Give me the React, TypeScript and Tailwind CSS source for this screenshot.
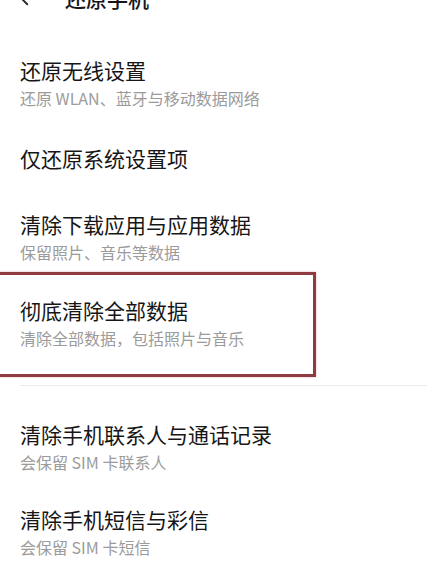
import React from "react";

type Item = {
  title: string;
  sub?: string;
  gap: string;
};

const topItems: Item[] = [
  { title: "还原无线设置", sub: "还原 WLAN、蓝牙与移动数据网络", gap: "mt-[37px]" },
  { title: "仅还原系统设置项", gap: "mt-[36px]" },
  { title: "清除下载应用与应用数据", sub: "保留照片、音乐等数据", gap: "mt-[38px]" },
];

const bottomItems: Item[] = [
  { title: "清除手机联系人与通话记录", sub: "会保留 SIM 卡联系人", gap: "mt-[34px]" },
  { title: "清除手机短信与彩信", sub: "会保留 SIM 卡短信", gap: "mt-[33px]" },
];

const font = { fontFamily: '"Noto Sans CJK SC", "Noto Sans", sans-serif' };

const Row = ({ item }: { item: Item }) => (
  <div className={`flex flex-col px-[20px] ${item.gap}`}>
    <span className="text-[21px] leading-[28px] text-[#161616]">{item.title}</span>
    {item.sub && (
      <span className="mt-[4px] text-[16px] leading-[20px] text-[#9b9b9b]">{item.sub}</span>
    )}
  </div>
);

export default function App() {
  return (
    <div className="h-[576px] w-[427px] overflow-hidden bg-white" style={font}>
      <div className="-mt-[21px] flex h-[40px] items-center">
        <svg
          className="ml-[16px]"
          width="18"
          height="18"
          viewBox="0 0 24 24"
          fill="none"
          stroke="#222"
          strokeWidth="2.4"
          strokeLinecap="round"
          strokeLinejoin="round"
        >
          <polyline points="15 5 8 12 15 19" />
        </svg>
        <span className="ml-[31px] text-[21px] font-medium text-[#161616]">还原手机</span>
      </div>

      {topItems.map((it) => (
        <Row key={it.title} item={it} />
      ))}

      <div className="-ml-[4px] mt-[10px] w-[320px] border-[3px] border-[#8e3b41] pb-[26px] pl-[21px] pt-[21px] shadow-[0_0_2px_rgba(220,120,130,0.6)]">
        <div className="flex flex-col">
          <span className="text-[21px] leading-[28px] text-[#161616]">彻底清除全部数据</span>
          <span className="mt-[4px] text-[16px] leading-[20px] text-[#9b9b9b]">
            清除全部数据，包括照片与音乐
          </span>
        </div>
      </div>

      <div className="ml-[20px] mt-[8px] h-px bg-[#ebebeb]" />

      {bottomItems.map((it) => (
        <Row key={it.title} item={it} />
      ))}
    </div>
  );
}
